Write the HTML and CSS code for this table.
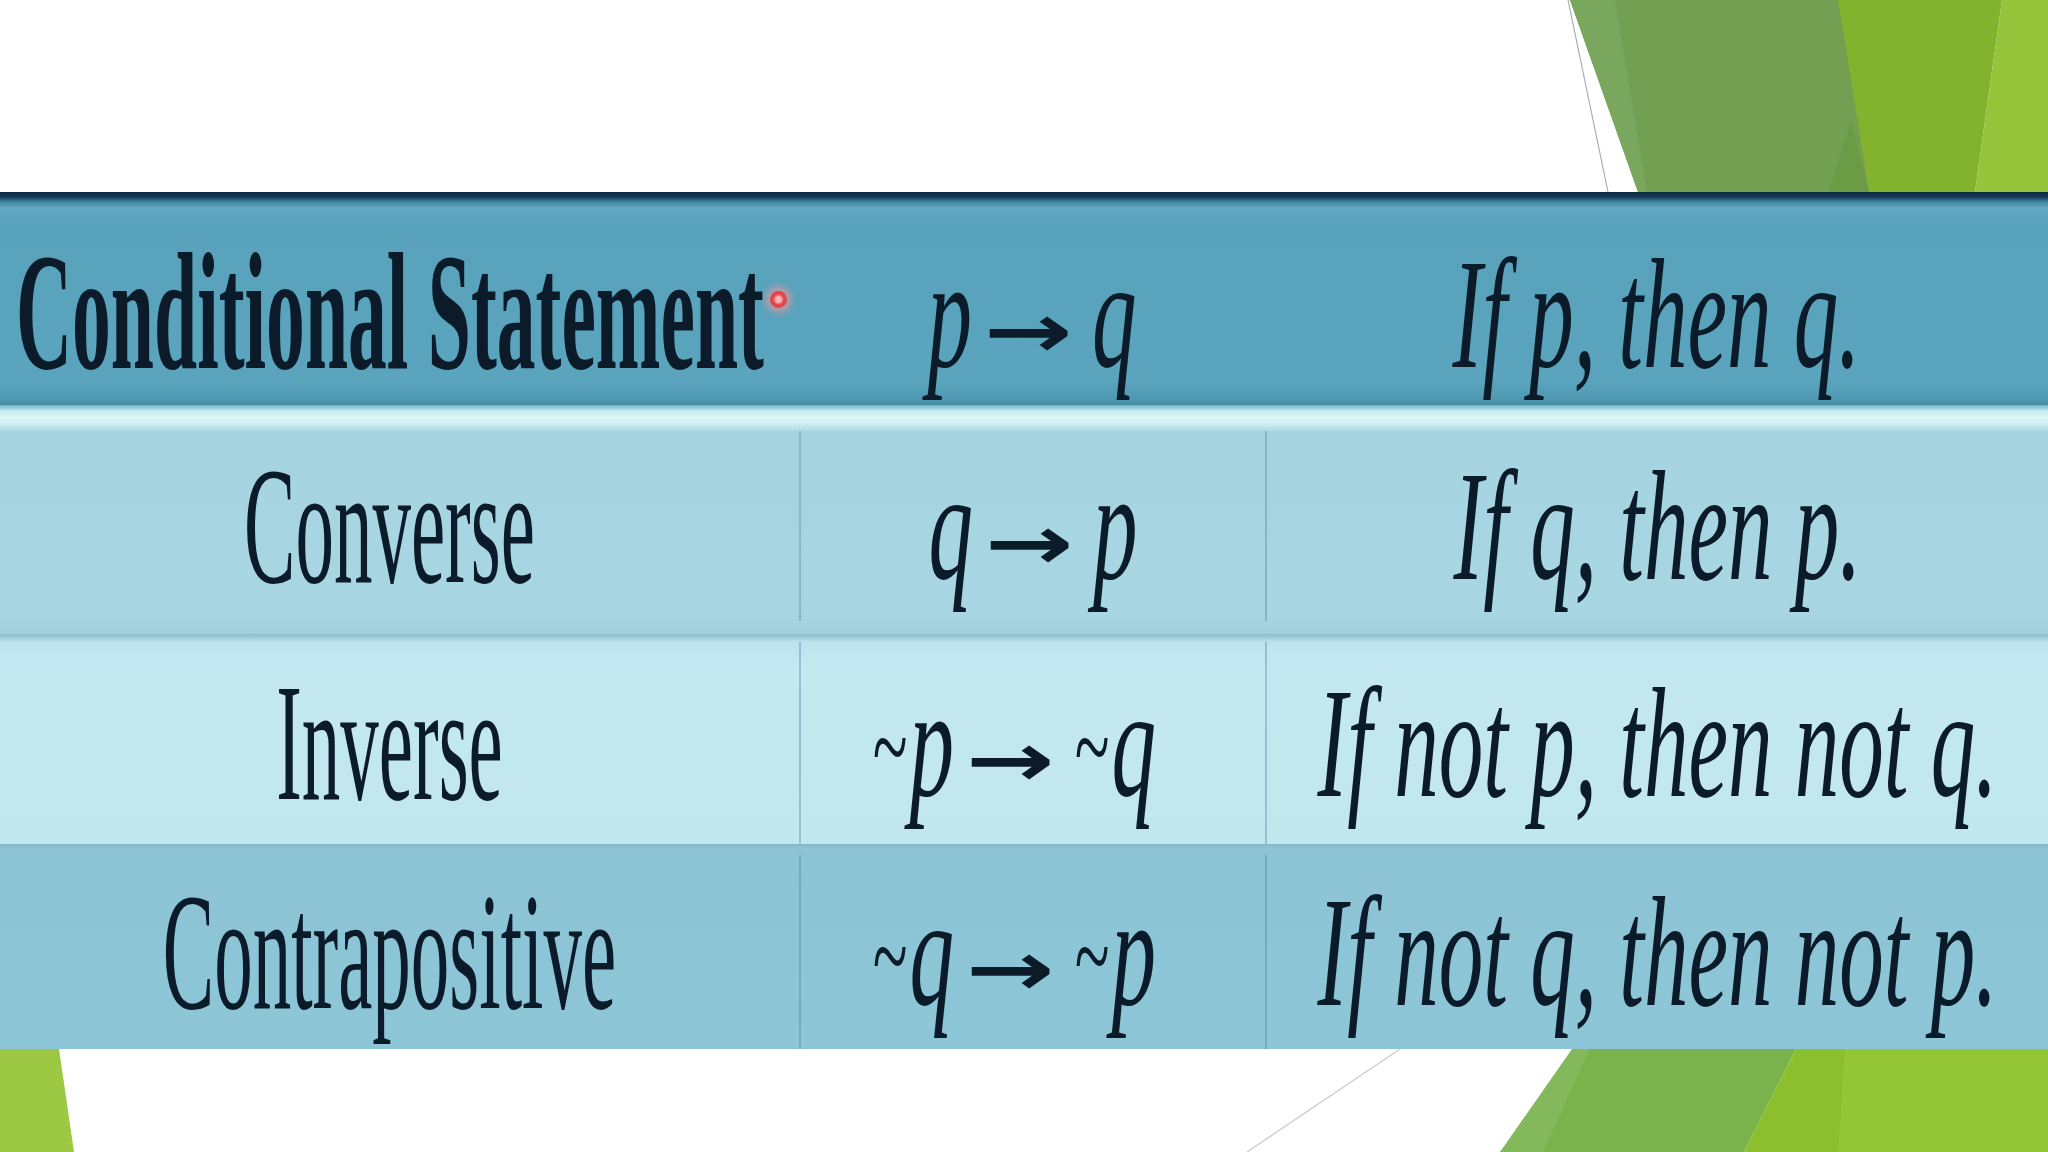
FILE: index.html
```html
<!DOCTYPE html>
<html lang="en">
<head>
<meta charset="utf-8">
<title>Conditional Statements</title>
<link rel="stylesheet" href="styles.css">
</head>
<body>
<div class="slide">
  <svg class="deco" viewBox="0 0 2048 1152" width="2048" height="1152" aria-hidden="true">
    <polygon points="1570,0 1840,0 1872,192 1638,192" fill="#739f52"/>
    <polygon points="1570,0 1615,0 1647,192 1638,192" fill="#7aa75e"/>
    <polygon points="1838,0 2002,0 1975,192 1869,192" fill="#83b22f"/>
    <polygon points="1829,192 1851,120 1869,192" fill="#6b9b45"/>
    <polygon points="2002,0 2048,0 2048,192 1975,192" fill="#95c43b"/>
    <line x1="1568" y1="0" x2="1608" y2="192" stroke="#a9aeb0" stroke-width="1.2"/>
    <polygon points="0,1049 59,1049 74,1152 0,1152" fill="#9cc843"/>
    <polygon points="1587,1049 1796,1049 1744,1152 1500,1152" fill="#7ab34c"/>
    <polygon points="1572,1049 1590,1049 1543,1152 1500,1152" fill="#84b95b"/>
    <polygon points="1796,1049 2048,1049 2048,1152 1744,1152" fill="#8cbf2e"/>
    <polygon points="1845,1049 2048,1049 2048,1152 1838,1152" fill="#93c535"/>
    <line x1="1400" y1="1049" x2="1247" y2="1152" stroke="#c9c9c9" stroke-width="1.2"/>
  </svg>

  <div class="table">
    <div class="row head">
      <div class="cell c1"><span class="t b">Conditional Statement</span><span class="dot"></span></div>
      <div class="cell c2"><span class="m">p</span><span class="arr">→</span><span class="m">q</span></div>
      <div class="cell c3"><span class="s">If p, then q.</span></div>
    </div>
    <div class="gap"></div>
    <div class="row body r2">
      <div class="cell c1"><span class="t">Converse</span></div>
      <div class="cell c2"><span class="m">q</span><span class="arr">→</span><span class="m">p</span></div>
      <div class="cell c3"><span class="s">If q, then p.</span></div>
    </div>
    <div class="row body r3">
      <div class="cell c1"><span class="t">Inverse</span></div>
      <div class="cell c2 neg"><span class="m"><span class="tl">~</span>p</span><span class="arr">→</span><span class="m"><span class="tl">~</span>q</span></div>
      <div class="cell c3"><span class="s">If not p, then not q.</span></div>
    </div>
    <div class="row body r4">
      <div class="cell c1"><span class="t">Contrapositive</span></div>
      <div class="cell c2 neg"><span class="m"><span class="tl">~</span>q</span><span class="arr">→</span><span class="m"><span class="tl">~</span>p</span></div>
      <div class="cell c3"><span class="s">If not q, then not p.</span></div>
    </div>
  </div>
</div>
</body>
</html>
```

FILE: styles.css
```css
* { box-sizing: border-box; }

html, body {
  margin: 0;
  padding: 0;
}

body {
  width: 2048px;
  height: 1152px;
  overflow: hidden;
  background: #ffffff;
  font-family: "Liberation Serif", "Times New Roman", serif;
  color: #0c1b29;
}

.slide {
  position: relative;
  width: 2048px;
  height: 1152px;
  padding-top: 192px;
}

.deco {
  position: absolute;
  left: 0;
  top: 0;
  z-index: 0;
}

.table {
  position: relative;
  z-index: 1;
  display: flex;
  flex-direction: column;
}

.row {
  display: grid;
  grid-template-columns: 799px 466px 783px;
}

.head {
  height: 213px;
  padding-top: 31px;
  background: linear-gradient(to bottom,
    #0c2840 0px, #153a56 5px, #3f88a3 10px, #62a9c0 16px,
    #58a2bb 34px, #5aa4bd 190px, #4d96af 209px, #44879f 213px);
}

.gap {
  height: 26px;
  background: linear-gradient(to bottom,
    #6fb0c4 0px, #c6ecf2 6px, #def7f9 12px, #d2f0f5 18px, #aed9e4 26px);
}

.r2 {
  height: 203px;
  padding-bottom: 13px;
  background: linear-gradient(to bottom, #a5d4e0 0px, #a8d6e2 180px, #a3d1dd 203px);
}

.r3 {
  height: 210px;
  padding-top: 8px;
  background: linear-gradient(to bottom, #8fbccb 0px, #9cc9d5 3px, #bde4ed 8px, #c3e8f0 30px, #c0e6ee 210px);
}

.r4 {
  height: 205px;
  padding-top: 11px;
  background: linear-gradient(to bottom, #84b6c6 0px, #8cc4d5 4px, #8dc6d7 205px);
}

.cell {
  display: flex;
  align-items: center;
  justify-content: center;
}

.c1 { padding-right: 20px; }

.head .c1 {
  justify-content: flex-start;
  padding-left: 16px;
  padding-right: 0;
}

.body .c2,
.body .c3 {
  border-left: 2px solid rgba(70, 125, 145, 0.35);
}

.neg { padding-right: 38px; }

.t {
  display: inline-block;
  line-height: 1;
  font-size: 77px;
  white-space: nowrap;
  transform: scaleY(2.17);
}

.t.b {
  font-weight: 700;
  font-size: 77.6px;
}

.s {
  display: inline-block;
  line-height: 1;
  font-style: italic;
  font-size: 89px;
  white-space: nowrap;
  transform: scaleY(1.77);
}

.m {
  display: inline-block;
  line-height: 1;
  font-style: italic;
  font-size: 89px;
  white-space: nowrap;
  transform: scaleY(1.77);
}

.tl {
  font-size: 64px;
  vertical-align: 6px;
  margin-right: 3px;
}

.arr {
  display: inline-block;
  font-family: "DejaVu Sans", sans-serif;
  font-weight: 700;
  font-size: 94px;
  line-height: 1;
  margin: 34px 24px 0 17px;
  transform: scale(1.13, 0.8);
}

.dot {
  flex: none;
  width: 17px;
  height: 17px;
  border-radius: 50%;
  margin-left: 6px;
  margin-bottom: 30px;
  background: radial-gradient(circle, #f8b4b6 0 22%, #e4444b 45% 100%);
  box-shadow: 0 0 6px 5px rgba(244, 150, 160, 0.6);
}
```
